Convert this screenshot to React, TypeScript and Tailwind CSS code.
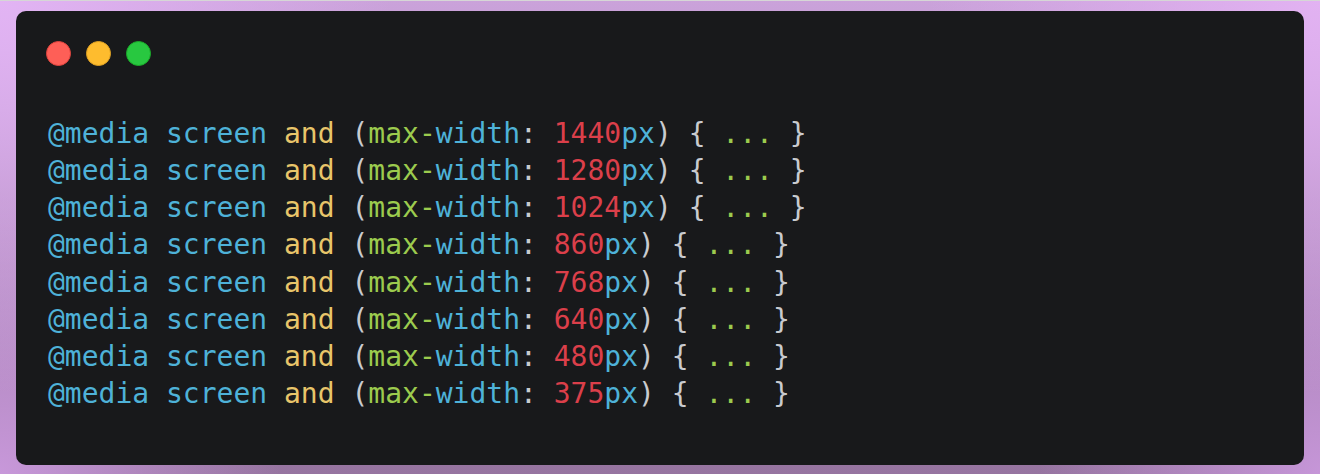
const breakpoints = ['1440', '1280', '1024', '860', '768', '640', '480', '375'];

const CodeLine = ({ size }: { size: string }) => (
  <div className="whitespace-pre">
    <span className="text-[#4eb2d8]">@media screen </span>
    <span className="text-[#e8c56a]">and</span>
    <span className="text-[#c9cbcf]"> (</span>
    <span className="text-[#9ccb4e]">max-</span>
    <span className="text-[#4eb2d8]">width</span>
    <span className="text-[#c9cbcf]">: </span>
    <span className="text-[#db3f4a]">{size}</span>
    <span className="text-[#4eb2d8]">px</span>
    <span className="text-[#c9cbcf]">) {'{'} </span>
    <span className="text-[#9ccb4e]">...</span>
    <span className="text-[#c9cbcf]"> {'}'}</span>
  </div>
);

export default function App() {
  return (
    <div className="w-[1320px] h-[474px] border-t border-[#d6d6d6] bg-[radial-gradient(circle_at_0%_0%,#e2b4f4_0%,transparent_28%),radial-gradient(circle_at_100%_0%,#e2b2f2_0%,transparent_28%),radial-gradient(circle_at_0%_100%,#c898da_0%,transparent_20%),radial-gradient(circle_at_100%_100%,#c696d8_0%,transparent_20%),linear-gradient(180deg,#caa2da,#9674a0)] px-4 pt-[10px] pb-[9px]">
      <div className="h-full rounded-[10px] bg-[#18191b] pt-[30px] pl-[30px]">
        {/* window controls */}
        <div className="flex gap-[15px]">
          <span className="w-[25px] h-[25px] rounded-full bg-[#fe5f57] border border-[#e0443e]" />
          <span className="w-[25px] h-[25px] rounded-full bg-[#febc2e] border border-[#dea123]" />
          <span className="w-[25px] h-[25px] rounded-full bg-[#28c840] border border-[#1aab29]" />
        </div>

        <div className="mt-[49px] pl-[2px] font-['DejaVu_Sans_Mono',monospace] text-[28px] leading-[37.14px]">
          {breakpoints.map((b) => (
            <CodeLine key={b} size={b} />
          ))}
        </div>
      </div>
    </div>
  );
}
